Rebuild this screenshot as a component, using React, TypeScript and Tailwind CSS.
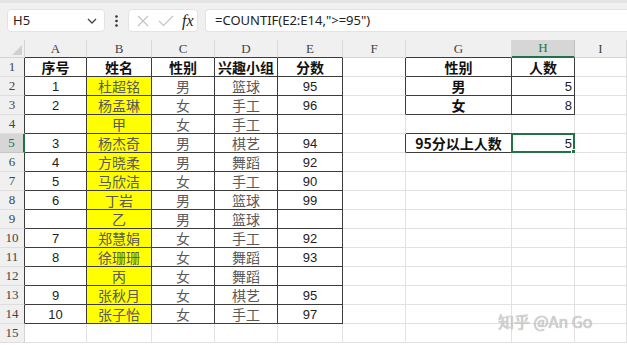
import React from "react";

const cjk = "font-['Noto_Sans_CJK_SC',sans-serif]";
const serif = "font-['Liberation_Serif',serif]";
const num = "font-['Liberation_Sans',sans-serif]";

const colLetters = ["A", "B", "C", "D", "E", "F", "G", "H", "I"];

const rows: string[][] = [
  ["序号", "姓名", "性别", "兴趣小组", "分数", "", "性别", "人数", ""],
  ["1", "杜超铭", "男", "篮球", "95", "", "男", "5", ""],
  ["2", "杨孟琳", "女", "手工", "96", "", "女", "8", ""],
  ["", "甲", "女", "手工", "", "", "", "", ""],
  ["3", "杨杰奇", "男", "棋艺", "94", "", "95分以上人数", "5", ""],
  ["4", "方晓柔", "男", "舞蹈", "92", "", "", "", ""],
  ["5", "马欣洁", "女", "手工", "90", "", "", "", ""],
  ["6", "丁岩", "男", "篮球", "99", "", "", "", ""],
  ["", "乙", "男", "篮球", "", "", "", "", ""],
  ["7", "郑慧娟", "女", "手工", "92", "", "", "", ""],
  ["8", "徐珊珊", "女", "舞蹈", "93", "", "", "", ""],
  ["", "丙", "女", "舞蹈", "", "", "", "", ""],
  ["9", "张秋月", "女", "棋艺", "95", "", "", "", ""],
  ["10", "张子怡", "女", "手工", "97", "", "", "", ""],
  ["", "", "", "", "", "", "", "", ""],
];

// r is 1-based sheet row, c is 0-based column (A = 0)
const bordered = (r: number, c: number) =>
  (r >= 1 && r <= 14 && c <= 4) ||
  (r >= 1 && r <= 3 && (c === 6 || c === 7)) ||
  (r === 5 && (c === 6 || c === 7));

const isNumber = (s: string) => /^[0-9]+$/.test(s);

function Cell({ r, c, value }: { r: number; c: number; value: string }) {
  const darkRight = bordered(r, c) || bordered(r, c + 1);
  const darkBottom = bordered(r, c) || bordered(r + 1, c);
  const yellow = c === 1 && r >= 2 && r <= 14;
  const bold = r === 1 && (c <= 4 || c >= 6) ? true : c === 6;
  const rightAlign = c === 7 && r > 1;
  const selected = r === 5 && c === 7;

  return (
    <div
      className={`relative flex items-center h-[19px] border-r border-b ${
        darkRight ? "border-r-[#3c3c3c]" : "border-r-[#e1e1e1]"
      } ${darkBottom ? "border-b-[#3c3c3c]" : "border-b-[#e1e1e1]"} ${
        yellow ? "bg-[#ffff00]" : "bg-white"
      } ${rightAlign ? "justify-end pr-[2px]" : "justify-center"}`}
    >
      {value && (
        <span
          className={
            isNumber(value)
              ? `${num} text-[13px] text-[#222] pt-[1px]`
              : bold
              ? `${cjk} text-[14px] font-bold text-[#111] leading-none`
              : `${cjk} text-[14px] text-[#5a5a5a] leading-none`
          }
        >
          {value}
        </span>
      )}
      {selected && (
        <div className="absolute -left-[1px] -top-[1px] right-[-1px] bottom-[-1px] border-2 border-[#217346]">
          <div className="absolute -right-[4px] -bottom-[4px] w-[6px] h-[6px] bg-[#217346] border border-white" />
        </div>
      )}
    </div>
  );
}

function FormulaBar() {
  return (
    <div className="h-[40px] bg-[#f0f0f0] border-t-[3px] border-t-[#e4e4e4] flex items-start pt-[6px] pl-[7px]">
      <div className="w-[98px] h-[23px] bg-white rounded-[4px] border border-[#e3e3e3] flex items-center justify-between px-[5px]">
        <span className="font-['Noto_Sans',sans-serif] text-[13px] text-[#222]">H5</span>
        <svg width="10" height="6" viewBox="0 0 10 6" className="mr-[2px]">
          <path d="M1 1 L5 5 L9 1" fill="none" stroke="#444" strokeWidth="1.3" />
        </svg>
      </div>
      <div className="w-[23px] h-[23px] flex items-center justify-center">
        <svg width="3" height="12" viewBox="0 0 3 12">
          <circle cx="1.5" cy="1.5" r="1.3" fill="#333" />
          <circle cx="1.5" cy="6" r="1.3" fill="#333" />
          <circle cx="1.5" cy="10.5" r="1.3" fill="#333" />
        </svg>
      </div>
      <div className="w-[70px] h-[23px] bg-white rounded-[4px] border border-[#e3e3e3] flex items-center pl-[6px]">
        <svg width="14" height="14" viewBox="0 0 14 14" className="ml-[1px]">
          <path d="M2 2 L12 12 M12 2 L2 12" stroke="#c4c4c4" strokeWidth="1.2" />
        </svg>
        <svg width="16" height="12" viewBox="0 0 16 12" className="ml-[8px]">
          <path d="M1 6 L5.5 10.5 L15 1" fill="none" stroke="#c4c4c4" strokeWidth="1.2" />
        </svg>
        <span className={`${serif} italic text-[16px] text-[#222] ml-[8px] leading-none`}>fx</span>
      </div>
      <div className="ml-[7px] flex-1 h-[23px] bg-white rounded-l-[4px] border border-r-0 border-[#e3e3e3] flex items-center pl-[9px]">
        <span className="font-['Noto_Sans',sans-serif] text-[13px] text-[#222]">
          =COUNTIF(E2:E14,"&gt;=95")
        </span>
      </div>
    </div>
  );
}

export default function App() {
  return (
    <div className="w-[627px] h-[345px] overflow-hidden bg-white relative">
      <FormulaBar />
      <div className="grid grid-cols-[25px_62px_65px_63px_63px_65px_63px_106px_63px_1fr]">
        {/* corner */}
        <div className="h-[18px] bg-[#f0f0f0] border-r border-b border-[#d4d4d4] flex items-end justify-end pr-[2px] pb-[2px]">
          <svg width="10" height="10" viewBox="0 0 10 10">
            <path d="M10 0 L10 10 L0 10 Z" fill="#d0d0d0" />
          </svg>
        </div>
        {colLetters.map((l, c) => {
          const active = c === 7;
          return (
            <div
              key={l}
              className={`h-[18px] flex items-center justify-center border-r ${
                active
                  ? "bg-[#d6d6d6] border-r-[#c0c0c0] border-b-2 border-b-[#217346] text-[#217346]"
                  : `bg-[#f0f0f0] border-r-[#d9d9d9] border-b ${
                      bordered(1, c) ? "border-b-[#3c3c3c]" : "border-b-[#d4d4d4]"
                    } text-[#444]`
              } ${serif} text-[13px]`}
            >
              {l}
            </div>
          );
        })}
        {rows.map((row, i) => {
          const r = i + 1;
          const activeRow = r === 5;
          return (
            <React.Fragment key={r}>
              <div
                className={`h-[19px] flex items-center justify-center border-b ${serif} text-[13px] ${
                  activeRow
                    ? "bg-[#d6d6d6] text-[#217346] border-r-2 border-r-[#217346] border-b-[#c6c6c6]"
                    : `bg-[#f0f0f0] text-[#444] border-r ${
                        bordered(r, 0) ? "border-r-[#3c3c3c]" : "border-r-[#d4d4d4]"
                      } border-b-[#dedede]`
                }`}
              >
                {r}
              </div>
              {row.map((v, c) => (
                <Cell key={c} r={r} c={c} value={v} />
              ))}
            </React.Fragment>
          );
        })}
      </div>
      <div
        className={`absolute left-[498px] top-[309px] ${cjk} text-[16px] text-[#d2d2d2] [text-shadow:0_0_1px_#9a9a9a]`}
      >
        知乎 @An Go
      </div>
    </div>
  );
}
